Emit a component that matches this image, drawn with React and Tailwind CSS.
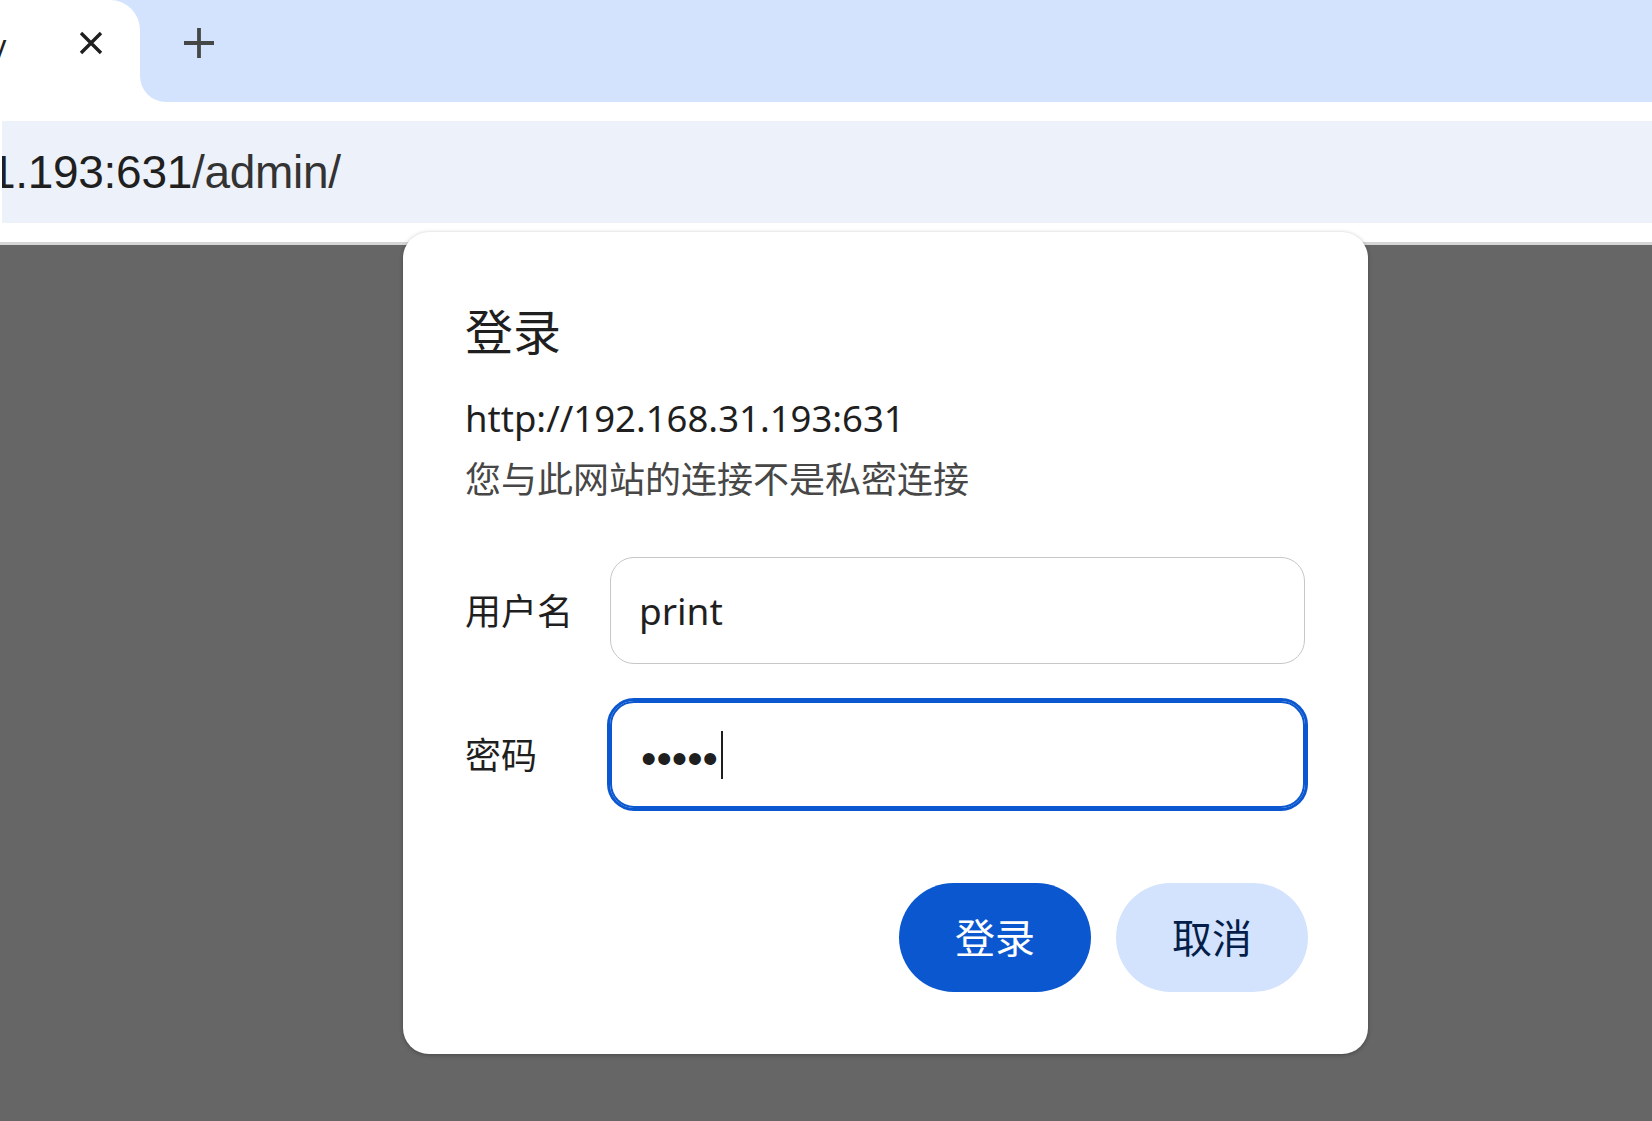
export default function App() {
  return (
    <div className="relative w-[1652px] h-[1121px] overflow-hidden bg-white font-['Noto_Sans','Noto_Sans_CJK_SC',sans-serif]">
      {/* Tab strip */}
      <div className="flex h-[102px] bg-white">
        <div className="w-[140px] h-full bg-[#d3e3fd]">
          <div className="h-full bg-white rounded-tr-[30px] flex items-start pt-[31px]">
            <div className="w-[8px] h-[30px] overflow-hidden">
              <span className="block -ml-[9px] text-[30px] leading-[30px] text-[#1f1f1f]">y</span>
            </div>
            <svg className="ml-[71px]" width="24" height="24" viewBox="0 0 24 24" fill="none">
              <path d="M2 2 L22 22 M22 2 L2 22" stroke="#1f1f1f" strokeWidth="3.4" />
            </svg>
          </div>
        </div>
        <div className="flex-1 bg-[#d3e3fd] rounded-bl-[26px] flex items-start pt-[27px]">
          <svg className="ml-[43px]" width="32" height="32" viewBox="0 0 32 32" fill="none">
            <path d="M16 1 V31 M1 16 H31" stroke="#444746" strokeWidth="3.8" />
          </svg>
        </div>
      </div>
      <div className="h-[19px] bg-white" />
      {/* Address bar */}
      <div className="ml-[2px] h-[102px] bg-[#edf2fa] flex items-center overflow-hidden">
        <span className="-ml-[12px] font-['Liberation_Sans',sans-serif] text-[46px] tracking-[-0.3px] leading-[60px] whitespace-nowrap text-[#1f1f1f]">
          1.193:631<span className="text-[#333333]">/admin/</span>
        </span>
      </div>
      <div className="h-[19px] bg-white" />
      <div className="h-[3px] bg-[#d6d6d6]" />
      <div className="h-[876px] bg-[#666666]" />

      {/* Dialog */}
      <div className="absolute left-[403px] top-[232px] w-[965px] h-[822px] rounded-[26px] bg-white shadow-[0_1px_4px_rgba(0,0,0,0.3)] pl-[62px] pr-[63px] pt-[76px]">
        <div className="h-[48px] text-[48px] leading-[48px] text-[#1f1f1f]">登录</div>
        <div className="mt-[42px] h-[40px] text-[36.5px] leading-[40px] text-[#1f1f1f]">http://192.168.31.193:631</div>
        <div className="mt-[22px] h-[40px] text-[36px] leading-[40px] text-[#474747]">您与此网站的连接不是私密连接</div>

        <div className="mt-[57px] flex items-center">
          <div className="w-[145px] pt-[3px] text-[36px] leading-[40px] text-[#1f1f1f]">用户名</div>
          <div className="flex-1 h-[107px] rounded-[24px] border-[1.5px] border-[#c7c7c7] flex items-center pl-[28px] text-[37px] leading-[44px] text-[#1f1f1f]">
            print
          </div>
        </div>

        <div className="mt-[37px] flex items-center">
          <div className="w-[145px] pt-[3px] text-[36px] leading-[40px] text-[#1f1f1f]">密码</div>
          <div className="flex-1 h-[107px] rounded-[24px] border-[2px] border-[#0b57d0] outline-3 outline-solid outline-[#0b57d0] flex items-center pl-[29px]">
            <span className="mt-[8px] font-['Liberation_Sans',sans-serif] text-[44px] leading-[45px] text-[#1f1f1f]">•••••</span>
            <span className="ml-[3px] w-[1.5px] h-[48px] bg-[#1f1f1f]" />
          </div>
        </div>

        <div className="mt-[75px] -mr-[3px] flex justify-end gap-[25px]">
          <button className="w-[192px] h-[109px] rounded-full bg-[#0b57d0] text-white text-[40px] leading-[48px]">登录</button>
          <button className="w-[192px] h-[109px] rounded-full bg-[#d3e3fd] text-[#041e49] text-[40px] leading-[48px]">取消</button>
        </div>
      </div>
    </div>
  );
}
